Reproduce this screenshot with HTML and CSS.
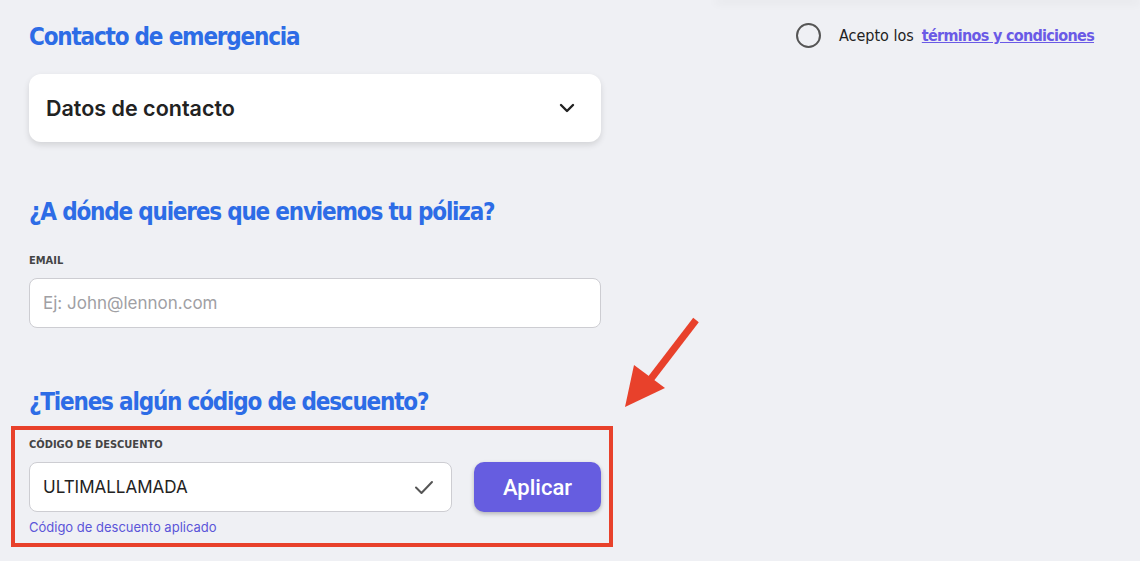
FILE: index.html
```html
<!DOCTYPE html>
<html>
<head>
  <title>Datos de la póliza</title>
  <link rel="stylesheet" href="styles.css">
</head>
<body>
  <div class="page">
    <div class="form-col">
      <h2 class="section-title first">Contacto de emergencia</h2>
      <div class="accordion">
        <span>Datos de contacto</span>
        <svg class="chevron" width="20" height="20" viewBox="0 0 20 20"><path d="M4 7 L10 13 L16 7" fill="none" stroke="#222" stroke-width="2.4" stroke-linecap="round" stroke-linejoin="round"/></svg>
      </div>

      <h2 class="section-title">¿A dónde quieres que enviemos tu póliza?</h2>
      <label class="field-label">EMAIL</label>
      <div class="text-input placeholder">Ej: John@lennon.com</div>

      <h2 class="section-title">¿Tienes algún código de descuento?</h2>
      <div class="highlight">
        <label class="field-label">CÓDIGO DE DESCUENTO</label>
        <div class="discount-row">
          <div class="text-input code">
            <span>ULTIMALLAMADA</span>
            <svg width="22" height="22" viewBox="0 0 22 22"><path d="M3 11.5 L8.5 17 L19 6" fill="none" stroke="#555" stroke-width="2" stroke-linecap="round" stroke-linejoin="round"/></svg>
          </div>
          <button class="apply-btn">Aplicar</button>
        </div>
        <p class="helper">Código de descuento aplicado</p>
      </div>
    </div>

    <div class="side-col">
      <div class="card-edge"></div>
      <div class="terms">
        <span class="radio"></span>
        <span>Acepto los</span>
        <a href="#" class="terms-link">términos y condiciones</a>
      </div>
    </div>
  </div>

  <svg class="arrow" width="100" height="110" viewBox="0 0 100 110">
    <line x1="96" y1="20" x2="50" y2="80" stroke="#e8412b" stroke-width="7"/>
    <polygon points="25,107 34,65 65,88" fill="#e8412b"/>
  </svg>
</body>
</html>
```

FILE: styles.css
```css
* {
  margin: 0;
  padding: 0;
  box-sizing: border-box;
}

body {
  background-color: #eff0f4;
  font-family: Inter, sans-serif;
  color: #222;
  height: 561px;
  overflow: hidden;
}

.page {
  display: flex;
}

.form-col {
  width: 601px;
  padding-left: 29px;
  display: flex;
  flex-direction: column;
}

.section-title {
  font-family: "DejaVu Sans Condensed", sans-serif;
  font-weight: bold;
  font-size: 24px;
  line-height: 32px;
  color: #2d6ce6;
  letter-spacing: -1.2px;
  margin-top: 54px;
}

.section-title.first {
  margin-top: 21px;
}

.accordion {
  margin-top: 21px;
  height: 68px;
  background: #fff;
  border-radius: 12px;
  box-shadow: 0 3px 6px rgba(0, 0, 0, 0.12);
  display: flex;
  align-items: center;
  justify-content: space-between;
  padding: 0 24px 0 17px;
  font-size: 21.5px;
  font-weight: 600;
  color: #222;
}

.field-label {
  display: block;
  font-family: "DejaVu Sans Condensed", sans-serif;
  font-weight: bold;
  font-size: 11px;
  color: #444;
  margin-top: 26px;
  margin-bottom: 11px;
}

.text-input {
  height: 50px;
  background: #fff;
  border: 1px solid #cdcdd2;
  border-radius: 8px;
  padding: 0 13px;
  display: flex;
  align-items: center;
  font-size: 17px;
}

.placeholder {
  color: #a0a0a4;
}

.form-col .text-input.placeholder + .section-title {
  margin-top: 58px;
}

.highlight {
  margin: 8px -12px 0 -18px;
  border: 4px solid #e8412b;
  padding: 4px 8px 8px 14px;
}

.highlight .field-label {
  margin-top: 4px;
}

.discount-row {
  display: flex;
  gap: 22px;
}

.code {
  flex: 1;
  justify-content: space-between;
  color: #222;
  padding-right: 16px;
}

.apply-btn {
  width: 127px;
  height: 50px;
  border: none;
  border-radius: 10px;
  background-color: #665de0;
  color: #fff;
  font-family: Roboto, sans-serif;
  font-size: 22px;
  font-weight: 500;
  box-shadow: 0 2px 4px rgba(0, 0, 0, 0.25);
}

.helper {
  font-size: 13px;
  color: #5b55d9;
  margin-top: 7px;
}

.side-col {
  flex: 1;
  display: flex;
  flex-direction: column;
}

.card-edge {
  margin-left: 114px;
  height: 2px;
  margin-top: -2px;
  box-shadow: 0 2px 10px rgba(0, 0, 0, 0.12);
}

.terms {
  margin-top: 23px;
  margin-left: 195px;
  display: flex;
  align-items: center;
  font-family: "DejaVu Sans Condensed", sans-serif;
  font-size: 16px;
  color: #222;
}

.radio {
  width: 25px;
  height: 25px;
  border: 2px solid #555;
  border-radius: 50%;
  margin-right: 18px;
}

.terms-link {
  margin-left: 8px;
  color: #6a5ae6;
  font-weight: bold;
  letter-spacing: -0.7px;
}

.arrow {
  position: absolute;
  left: 600px;
  top: 300px;
}
```
